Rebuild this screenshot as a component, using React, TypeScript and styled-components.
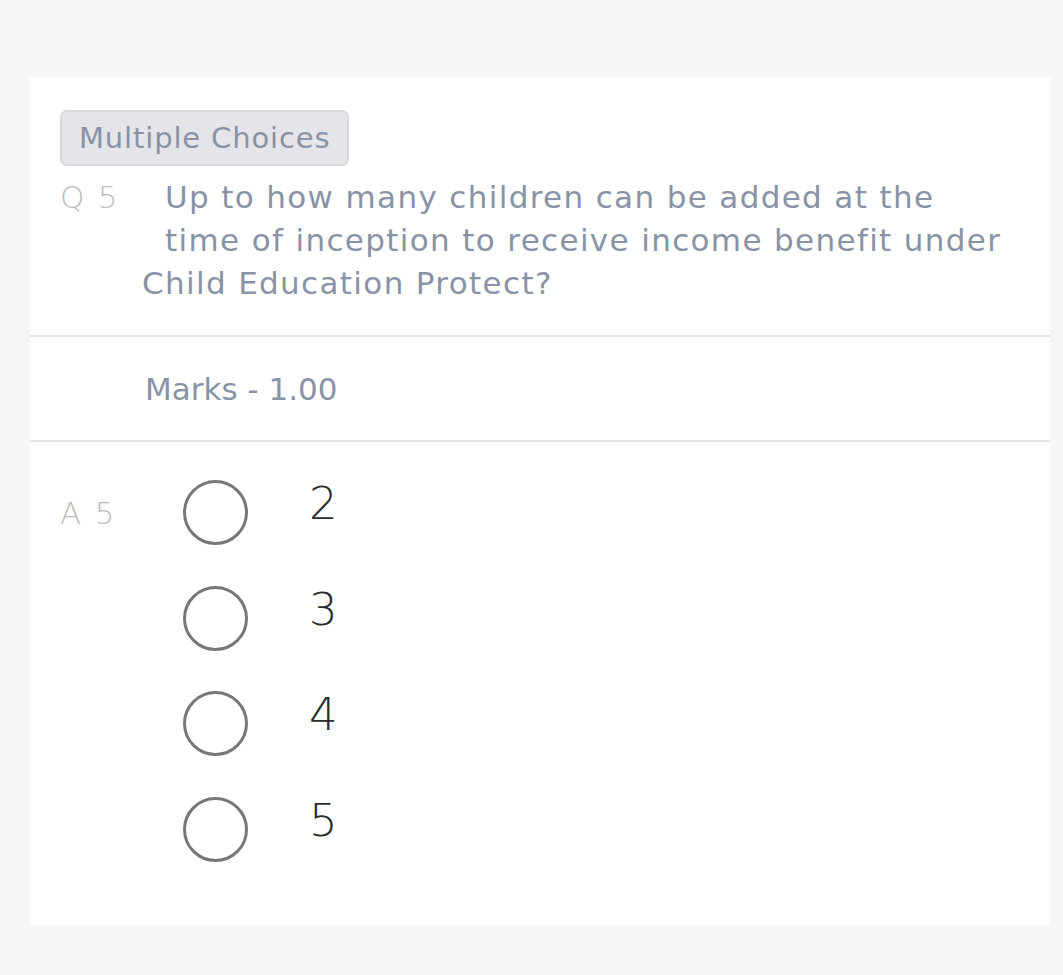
import styled, { createGlobalStyle } from 'styled-components';

const GlobalStyle = createGlobalStyle`
  html, body {
    margin: 0;
    padding: 0;
    background: #f6f6f6;
  }
  body {
    font-family: 'DejaVu Sans', 'Noto Sans', sans-serif;
  }
`;

const Page = styled.div`
  padding: 77px 13px 49px 30px;
`;

const Card = styled.div`
  background: #ffffff;
  width: 1020px;
  min-height: 849px;
  box-sizing: border-box;
`;

const QuestionBlock = styled.div`
  padding: 33px 30px 30px 30px;
  border-bottom: 2px solid #e6e6e6;
`;

const Badge = styled.span`
  display: inline-block;
  box-sizing: border-box;
  height: 56px;
  line-height: 52px;
  padding: 0 17px;
  background: #e5e4e9;
  border: 2px solid #d9d9de;
  border-radius: 7px;
  color: #8893a5;
  font-size: 29px;
  letter-spacing: 0.85px;
`;

const QuestionRow = styled.div`
  display: flex;
  margin-top: 10px;
`;

const Label = styled.div`
  width: 82px;
  flex-shrink: 0;
  color: #bcbcbc;
  font-size: 31px;
  line-height: 43px;
  font-weight: 300;
  letter-spacing: 1.8px;
`;

const QuestionText = styled.p`
  margin: 0;
  flex: 1;
  white-space: nowrap;
  color: #8893a5;
  font-size: 31px;
  line-height: 43px;
  letter-spacing: 1.35px;
`;

const Indent = styled.span`
  float: left;
  width: 23px;
  height: 86px;
`;

const MarksBlock = styled.div`
  height: 103px;
  display: flex;
  align-items: center;
  padding-left: 115px;
  border-bottom: 2px solid #e6e6e6;
  color: #8893a5;
  font-size: 31px;
`;

const AnswerBlock = styled.div`
  display: flex;
  padding: 18px 30px 43px 30px;
`;

const AnswerLabel = styled.div`
  width: 123px;
  flex-shrink: 0;
  height: 106px;
  display: flex;
  align-items: center;
  color: #bcbcbc;
  font-size: 31px;
  font-weight: 300;
  letter-spacing: 1.8px;
  padding-bottom: 1px;
  box-sizing: border-box;
`;

const Options = styled.div`
  display: flex;
  flex-direction: column;
`;

const Option = styled.label`
  height: 105.5px;
  display: flex;
  align-items: center;
`;

const Radio = styled.span`
  width: 65px;
  height: 65px;
  box-sizing: border-box;
  border: 3px solid #777777;
  border-radius: 50%;
  flex-shrink: 0;
`;

const OptionText = styled.span`
  margin-left: 61px;
  margin-bottom: 18px;
  color: #2b2b2b;
  font-size: 45px;
  font-weight: 300;
`;

const options = ['2', '3', '4', '5'];

const App = () => {
  return (
    <>
      <GlobalStyle />
      <Page>
        <Card>
          <QuestionBlock>
            <Badge>Multiple Choices</Badge>
            <QuestionRow>
              <Label>Q 5</Label>
              <QuestionText>
                <Indent />
                Up to how many children can be added at the
                <br />
                time of inception to receive income benefit under
                <br />
                Child Education Protect?
              </QuestionText>
            </QuestionRow>
          </QuestionBlock>
          <MarksBlock>Marks - 1.00</MarksBlock>
          <AnswerBlock>
            <AnswerLabel>A 5</AnswerLabel>
            <Options>
              {options.map((option) => (
                <Option key={option}>
                  <Radio />
                  <OptionText>{option}</OptionText>
                </Option>
              ))}
            </Options>
          </AnswerBlock>
        </Card>
      </Page>
    </>
  );
};

export default App;
